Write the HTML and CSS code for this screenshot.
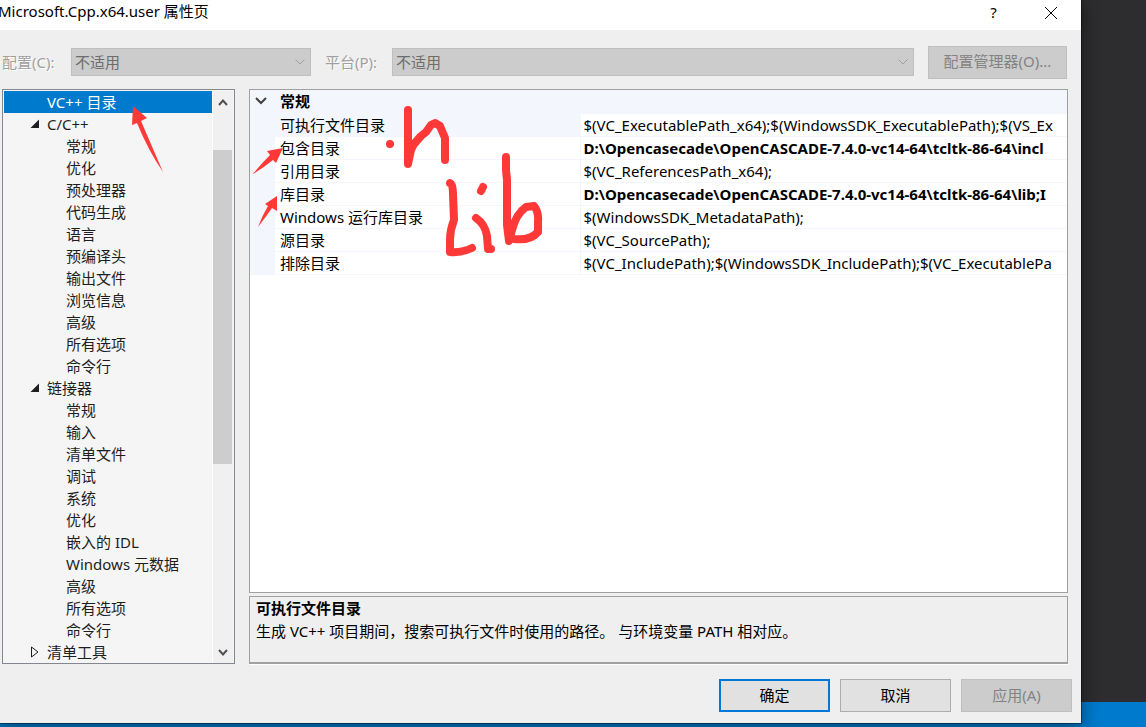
FILE: index.html
```html
<!DOCTYPE html>
<html lang="zh-CN">
<head>
  <meta charset="UTF-8" />
  <meta name="viewport" content="width=device-width, initial-scale=1.0"/>
  <title>Microsoft.Cpp.x64.user 属性页</title>
  <link rel="stylesheet" href="styles.css">
</head>
<body>

  <div class="statusbar"></div>

  <main class="dialog">
    <header class="titlebar">
      <h1>Microsoft.Cpp.x64.user 属性页</h1>
      <button class="title-button" aria-label="帮助">?</button>
      <button class="title-button" aria-label="关闭">
        <svg width="14" height="14" viewBox="0 0 14 14"><path d="M1 1L13 13M13 1L1 13"/></svg>
      </button>
    </header>

    <div class="toolbar">
      <label for="config">配置(C):</label>
      <div class="combo combo-config">
        <select id="config" disabled><option>不适用</option></select>
        <svg width="10" height="6" viewBox="0 0 10 6"><path d="M0.5 0.5L5 5L9.5 0.5"/></svg>
      </div>
      <label for="platform">平台(P):</label>
      <div class="combo combo-platform">
        <select id="platform" disabled><option>不适用</option></select>
        <svg width="10" height="6" viewBox="0 0 10 6"><path d="M0.5 0.5L5 5L9.5 0.5"/></svg>
      </div>
      <button class="manager" disabled>配置管理器(O)...</button>
    </div>

    <div class="content">
      <nav class="tree">
        <ul class="tree-list">
          <li><a class="selected" href="#">VC++ 目录</a></li>
          <li>
            <a href="#"><svg class="expander" width="10" height="10" viewBox="0 0 10 10"><path class="open" d="M9 0.5V9H0.5Z"/></svg>C/C++</a>
            <ul>
              <li><a href="#">常规</a></li>
              <li><a href="#">优化</a></li>
              <li><a href="#">预处理器</a></li>
              <li><a href="#">代码生成</a></li>
              <li><a href="#">语言</a></li>
              <li><a href="#">预编译头</a></li>
              <li><a href="#">输出文件</a></li>
              <li><a href="#">浏览信息</a></li>
              <li><a href="#">高级</a></li>
              <li><a href="#">所有选项</a></li>
              <li><a href="#">命令行</a></li>
            </ul>
          </li>
          <li>
            <a href="#"><svg class="expander" width="10" height="10" viewBox="0 0 10 10"><path class="open" d="M9 0.5V9H0.5Z"/></svg>链接器</a>
            <ul>
              <li><a href="#">常规</a></li>
              <li><a href="#">输入</a></li>
              <li><a href="#">清单文件</a></li>
              <li><a href="#">调试</a></li>
              <li><a href="#">系统</a></li>
              <li><a href="#">优化</a></li>
              <li><a href="#">嵌入的 IDL</a></li>
              <li><a href="#">Windows 元数据</a></li>
              <li><a href="#">高级</a></li>
              <li><a href="#">所有选项</a></li>
              <li><a href="#">命令行</a></li>
            </ul>
          </li>
          <li><a href="#"><svg class="expander" width="10" height="12" viewBox="0 0 10 12"><path class="closed" d="M1.5 1V11L8 6Z"/></svg>清单工具</a></li>
        </ul>
        <div class="scrollbar">
          <button aria-label="向上滚动"><svg width="10" height="7" viewBox="0 0 10 7"><path d="M1 6L5 1.5L9 6"/></svg></button>
          <div class="track"><div class="thumb"></div></div>
          <button aria-label="向下滚动"><svg width="10" height="7" viewBox="0 0 10 7"><path d="M1 1L5 5.5L9 1"/></svg></button>
        </div>
      </nav>

      <div class="side">
        <div class="grid">
          <table>
            <colgroup><col class="col-gutter"><col class="col-name"><col></colgroup>
            <tr class="category">
              <td><button aria-label="折叠"><svg width="12" height="8" viewBox="0 0 12 8"><path d="M1 1L6 6L11 1"/></svg></button></td>
              <th colspan="2">常规</th>
            </tr>
            <tr class="current"><td></td><th>可执行文件目录</th><td>$(VC_ExecutablePath_x64);$(WindowsSDK_ExecutablePath);$(VS_Ex</td></tr>
            <tr><td></td><th>包含目录</th><td class="changed">D:\Opencasecade\OpenCASCADE-7.4.0-vc14-64\tcltk-86-64\incl</td></tr>
            <tr><td></td><th>引用目录</th><td>$(VC_ReferencesPath_x64);</td></tr>
            <tr><td></td><th>库目录</th><td class="changed">D:\Opencasecade\OpenCASCADE-7.4.0-vc14-64\tcltk-86-64\lib;I</td></tr>
            <tr><td></td><th>Windows 运行库目录</th><td>$(WindowsSDK_MetadataPath);</td></tr>
            <tr><td></td><th>源目录</th><td>$(VC_SourcePath);</td></tr>
            <tr><td></td><th>排除目录</th><td>$(VC_IncludePath);$(WindowsSDK_IncludePath);$(VC_ExecutablePa</td></tr>
          </table>
        </div>
        <div class="description">
          <h2>可执行文件目录</h2>
          <p>生成 VC++ 项目期间，搜索可执行文件时使用的路径。 与环境变量 PATH 相对应。</p>
        </div>
      </div>
    </div>

    <footer class="actions">
      <button class="default">确定</button>
      <button>取消</button>
      <button disabled>应用(A)</button>
    </footer>

    <!-- red pen marks -->
    <svg class="ink" width="560" height="270" viewBox="0 0 560 270">
      <g class="arrows">
        <path d="M133 106L147 118L141 121L163 172Q148 150 137 123L132 125Z"/>
        <path d="M283 148L267 151L270 155Q261 164 253 174Q263 168 273 160L276 163Z"/>
        <path d="M277 196L265 204L268 206Q262 216 258 227Q265 218 272 208L277 211Z"/>
      </g>
      <g class="pen">
        <path d="M390 144V144.1"/>
        <path d="M408 110V164L411 150L414 144L421 136L426 132L431 125L435 123L440 126L445 138V160"/>
        <path d="M450 183Q453 184 453 194L454 220Q450 230 450 240V252Q462 253 472 248"/>
        <path d="M483 187L481 191"/>
        <path d="M476 218Q485 224 487 236L488 249L491 249"/>
        <path d="M506 157V170L507 180V225L509 241L512 230Q516 214 526 207L534 206Q539 212 538 222V232Q530 241 514 239"/>
      </g>
    </svg>
  </main>

</body>
</html>
```
FILE: styles.css
```css
* {
  box-sizing: border-box;
}

body {
  margin: 0;
  min-height: 100vh;
  padding: 0 65px 4px 0;
  background-color: #2d2d30;
  color: #000;
  font-family: "Noto Sans", "Noto Sans CJK SC", sans-serif;
  font-size: 15px;
  line-height: 22px;
  display: flex;
  overflow: hidden;
}

button, select {
  font: inherit;
  color: inherit;
}

ul {
  list-style: none;
  margin: 0;
  padding: 0;
}

svg {
  fill: none;
}

.statusbar {
  position: absolute;
  left: 0;
  right: 0;
  bottom: 0;
  height: 25px;
  background-color: #007acc;
}

.dialog {
  position: relative;
  flex: 1;
  min-width: 0;
  display: flex;
  flex-direction: column;
  background-color: #efefef;
  box-shadow: 0 0 0 1px rgba(0, 0, 0, 0.4), 0 4px 16px 2px rgba(0, 0, 0, 0.4);
}

/* title bar */
.titlebar {
  display: flex;
  height: 30px;
  padding-right: 2px;
  background-color: #fff;
}

.titlebar h1 {
  flex: 1;
  margin: 0 0 0 -2px;
  font-size: 15px;
  line-height: 22px;
  font-weight: normal;
}

.title-button {
  width: 57px;
  height: 23px;
  padding: 0;
  border: none;
  background: none;
}

.title-button svg {
  stroke: #000;
  vertical-align: middle;
}

/* configuration row */
.toolbar {
  display: flex;
  align-items: center;
  height: 59px;
  padding: 5px 14px 0 2px;
}

.toolbar label {
  color: #a0a0a0;
  text-shadow: 1px 1px #fff;
  white-space: nowrap;
}

.toolbar label[for="config"] {
  width: 69px;
}

.toolbar label[for="platform"] {
  width: 67px;
}

.combo {
  display: grid;
  align-items: center;
}

.combo select,
.combo svg {
  grid-area: 1 / 1;
}

.combo select {
  width: 100%;
  height: 28px;
  padding: 0 3px;
  border: 1px solid #bfbfbf;
  border-radius: 0;
  background-color: #ccc;
  color: #6d6d6d;
  opacity: 1;
  appearance: none;
}

.combo svg {
  justify-self: end;
  margin-right: 6px;
  stroke: #a0a0a0;
  pointer-events: none;
}

.combo-config {
  width: 240px;
  margin-right: 14px;
}

.combo-platform {
  flex: 1;
  margin-right: 14px;
}

.manager {
  width: 139px;
}

.manager,
.actions button {
  height: 33px;
  padding: 0 0 2px;
  border: 1px solid #adadad;
  background-color: #e1e1e1;
}

.manager:disabled,
.actions button:disabled {
  border-color: #bfbfbf;
  background-color: #ccc;
  color: #838383;
}

.content {
  flex: 1;
  display: flex;
  gap: 14px;
  padding: 0 13px 0 2px;
}

/* tree */
.tree {
  width: 233px;
  display: flex;
  padding: 1px 1px 0;
  border: 1px solid #828790;
  background-color: #f5f5f5;
}

.tree-list {
  flex: 1;
}

.tree a {
  display: flex;
  align-items: center;
  height: 22px;
  padding-left: 43px;
  color: #1e1e1e;
  text-decoration: none;
}

.tree ul ul a {
  padding-left: 62px;
}

.tree a.selected {
  background-color: #007acc;
  color: #fff;
}

.expander {
  margin-left: -17px;
  margin-right: 7px;
}

.open {
  fill: #1e1e1e;
}

.closed {
  stroke: #1e1e1e;
}

.scrollbar {
  width: 21px;
  display: flex;
  flex-direction: column;
  border-left: 1px solid #fff;
  background-color: #f0f0f0;
}

.scrollbar button {
  height: 22px;
  padding: 0;
  border: none;
  background: none;
  line-height: 0;
}

.scrollbar svg {
  stroke: #505050;
  stroke-width: 2;
}

.track {
  flex: 1;
  padding-top: 37px;
}

.thumb {
  width: 19px;
  height: 64%;
  background-color: #cdcdcd;
}

/* property grid */
.side {
  flex: 1;
  min-width: 0;
  display: flex;
  flex-direction: column;
  gap: 3px;
}

.grid {
  flex: 1;
  border: 1px solid #a0a0a0;
  background-color: #fff;
}

.grid table {
  width: 100%;
  table-layout: fixed;
  border-collapse: collapse;
}

.col-gutter {
  width: 25px;
}

.col-name {
  width: 305px;
}

.grid th,
.grid td {
  height: 23px;
  padding: 0 0 0 5px;
  border-bottom: 1px solid #f3f6fc;
  font-weight: normal;
  text-align: left;
  white-space: nowrap;
  overflow: hidden;
}

.grid td:last-child {
  padding-left: 3px;
  border-left: 1px solid #f3f6fc;
}

.grid td:first-child,
.grid .category th,
.grid .current th {
  background-color: #f3f6fc;
}

.grid .category th,
.grid td.changed {
  font-weight: bold;
}

.grid button {
  display: block;
  padding: 0;
  border: none;
  background: none;
  line-height: 0;
}

.grid button svg {
  stroke: #404040;
  stroke-width: 2;
}

.description {
  height: 68px;
  padding: 0 6px;
  border: 1px solid #a0a0a0;
  border-bottom-width: 2px;
  box-shadow: 0 1px #fff;
}

.description h2,
.description p {
  margin: 0;
  font-size: 15px;
  line-height: 23px;
}

/* dialog buttons */
.actions {
  display: flex;
  justify-content: flex-end;
  gap: 10px;
  padding: 15px 9px 11px 0;
}

.actions button {
  width: 111px;
}

.actions .default {
  border: 2px solid #0078d7;
}

/* pen marks over the dialog */
.ink {
  position: absolute;
  left: 0;
  top: 0;
  pointer-events: none;
}

.arrows {
  fill: #ff3838;
}

.pen {
  stroke: #ff3838;
  stroke-width: 8;
  stroke-linecap: round;
  stroke-linejoin: round;
}
```
